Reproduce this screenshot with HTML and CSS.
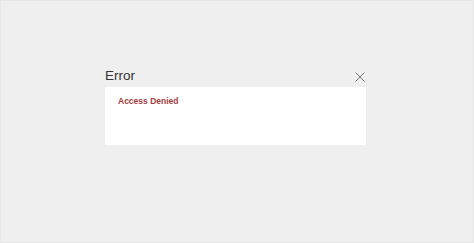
FILE: index.html
```html
<!DOCTYPE html>
<html>
<head>
<meta charset="utf-8">
<link rel="stylesheet" href="styles.css">
</head>
<body>
<div class="dialog">
  <div class="dialog-header">
    <span class="dialog-title">Error</span>
    <button class="dialog-close" aria-label="Close">
      <svg width="10" height="10" viewBox="0 0 10 10"><path d="M0.5 0.5 L9.5 9.5 M9.5 0.5 L0.5 9.5" stroke="#777" stroke-width="1" fill="none"/></svg>
    </button>
  </div>
  <div class="dialog-body">
    <p class="error-text">Access Denied</p>
  </div>
</div>
</body>
</html>
```
FILE: styles.css
```css
html, body {
  margin: 0;
  padding: 0;
  height: 100%;
}
body {
  background: #efefef;
  font-family: "Liberation Sans", Arial, sans-serif;
  box-shadow: inset 0 0 0 1px #e6e6e6;
  overflow: hidden;
}
.dialog {
  width: 261px;
  margin-left: 105px;
  padding-top: 67px;
}
.dialog-header {
  display: flex;
  align-items: center;
  justify-content: space-between;
  height: 20px;
}
.dialog-title {
  font-size: 13.5px;
  color: #333;
  line-height: 16px;
  margin-top: -2px;
}
.dialog-close {
  border: 0;
  background: none;
  padding: 0;
  margin-right: 1px;
  width: 10px;
  height: 10px;
  display: flex;
}
.dialog-body {
  background: #fff;
  height: 58px;
  padding: 9px 13px 0;
  box-sizing: border-box;
}
.error-text {
  margin: 0;
  font-size: 8.5px;
  font-weight: bold;
  color: #a23d3d;
  line-height: 10px;
}
```
